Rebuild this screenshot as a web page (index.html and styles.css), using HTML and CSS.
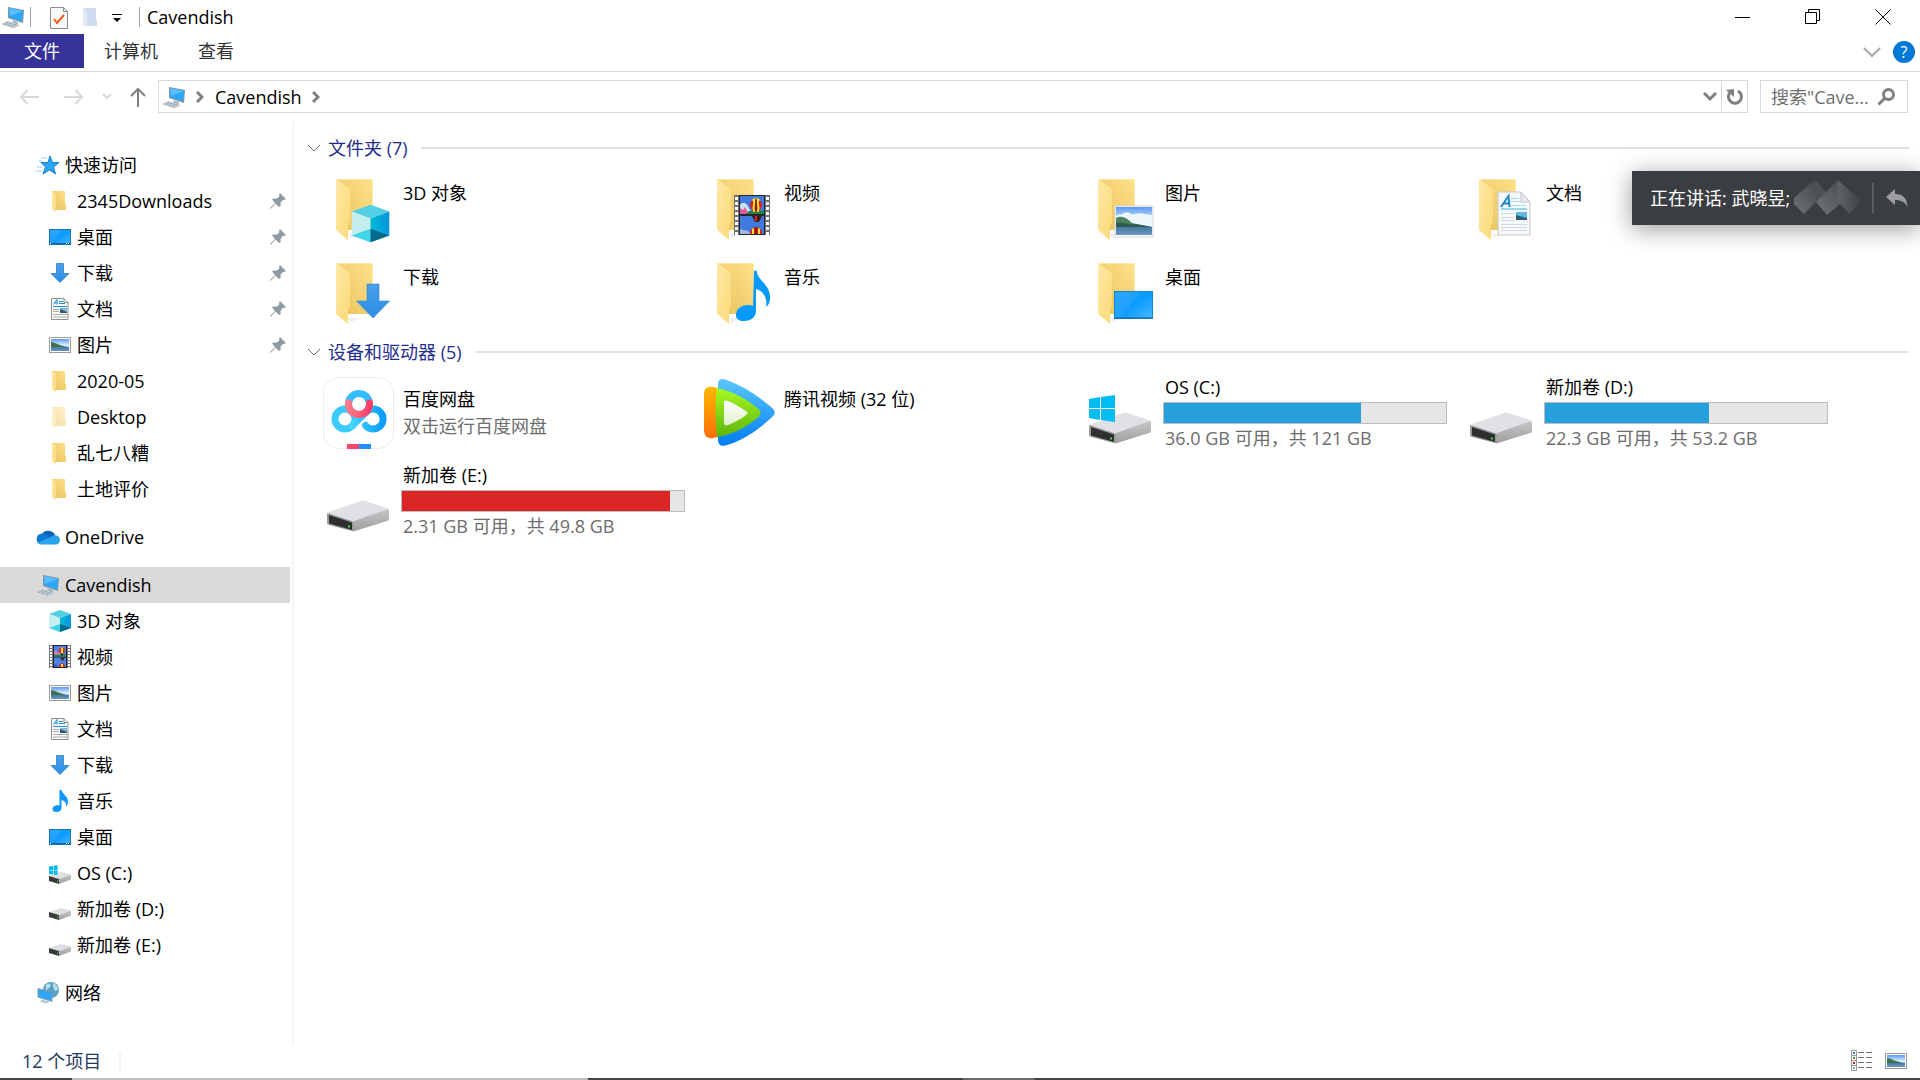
FILE: index.html
```html
<!DOCTYPE html>
<html lang="zh-CN">
<head>
<meta charset="utf-8">
<meta name="viewport" content="width=device-width, initial-scale=1">
<title>Cavendish</title>
<link rel="stylesheet" href="styles.css">
</head>
<body>
<svg class="sprite" aria-hidden="true">
  <defs>
    <linearGradient id="gBack" x1="0" y1="1" x2="1" y2="0"><stop offset="0" stop-color="#e8c35c"/><stop offset="1" stop-color="#ffe08a"/></linearGradient>
    <linearGradient id="gFlap" x1="0" y1="0" x2="1" y2="1"><stop offset="0" stop-color="#ffe9a6"/><stop offset="1" stop-color="#fbd978"/></linearGradient>
    <linearGradient id="gDesk" x1="0" y1="0" x2="1" y2="1"><stop offset="0" stop-color="#1e9fff"/><stop offset=".5" stop-color="#0a9bff"/><stop offset="1" stop-color="#4ab8ff"/></linearGradient>
    <linearGradient id="gDown" x1="0" y1="0" x2="0" y2="1"><stop offset="0" stop-color="#4a9fe8"/><stop offset="1" stop-color="#2b8ee8"/></linearGradient>
    <linearGradient id="gSky" x1="0" y1="0" x2="0" y2="1"><stop offset="0" stop-color="#5a97f5"/><stop offset=".5" stop-color="#d8effc"/><stop offset="1" stop-color="#cfe9f7"/></linearGradient>
    <linearGradient id="gSea" x1="0" y1="0" x2="0" y2="1"><stop offset="0" stop-color="#46789f"/><stop offset="1" stop-color="#6797c4"/></linearGradient>
    <linearGradient id="gSide" x1="0" y1="0" x2="0" y2="1"><stop offset="0" stop-color="#c6c7c9"/><stop offset="1" stop-color="#9d9ea0"/></linearGradient>
    <linearGradient id="gCubeR" x1="0" y1="0" x2="1" y2="0"><stop offset="0" stop-color="#00bcd8"/><stop offset="1" stop-color="#0893d8"/></linearGradient>
    <linearGradient id="gPan" x1="0" y1="0" x2="1" y2="0"><stop offset="0" stop-color="#45d4ff"/><stop offset="1" stop-color="#0a9cff"/></linearGradient>
    <linearGradient id="gRed" x1="0" y1="0" x2="1" y2="0"><stop offset="0" stop-color="#ff7a8a"/><stop offset="1" stop-color="#ff3d68"/></linearGradient>
    <linearGradient id="gTvB" x1="0" y1="0" x2="0" y2="1"><stop offset="0" stop-color="#5cc8ff"/><stop offset="1" stop-color="#007cf5"/></linearGradient>
    <linearGradient id="gTvO" x1="0" y1="0" x2="0" y2="1"><stop offset="0" stop-color="#ffb700"/><stop offset="1" stop-color="#ff6d0a"/></linearGradient>
    <linearGradient id="gTvG" x1="0" y1="0" x2="0" y2="1"><stop offset="0" stop-color="#a8fa22"/><stop offset="1" stop-color="#5cb40c"/></linearGradient>
    <linearGradient id="gTvW" x1="0" y1="0" x2="0" y2="1"><stop offset="0" stop-color="#ffffff"/><stop offset="1" stop-color="#dff2c8"/></linearGradient>
    <linearGradient id="gHaze" x1="1" y1="0" x2="0" y2="1"><stop offset="0" stop-color="#44474b"/><stop offset="1" stop-color="#707377"/></linearGradient>
    <linearGradient id="gHaze2" x1="0" y1="0" x2="1" y2="0"><stop offset="0" stop-color="#606367"/><stop offset="1" stop-color="#3f4246"/></linearGradient>
  </defs>

  <symbol id="pc" viewBox="0 -1 24 24">
    <path d="M7 1l16 3-1 13L7 12z" fill="#7e95a5"/><path d="M8 2l14 3-1 10.500L8 11z" fill="#2aa8fb"/><path d="M8 2l14 3-13 5z" fill="#58bcff"/>
    <path d="M12 14l5 2v3l-6-1z" fill="#a9b8c3"/>
    <path d="M0 18l7-3 12 4-6 3.500z" fill="#c5d0d8"/><path d="M2 18l10 3M5 16.500l11 3M7 16l-5 3M11 17l-5 3M15 18l-5 3" stroke="#8fa0ac" stroke-width=".8" fill="none" stroke-dasharray="2 1"/>
  </symbol>
  <symbol id="folder" viewBox="1 -1 24 24">
    <path d="M5 1h13v12l1 1v6H8z" fill="url(#gBack)"/><path d="M5 1l4 3.500V19l-.5 3L5 19z" fill="url(#gFlap)"/>
  </symbol>
  <symbol id="star" viewBox="0 -1 24 24">
    <path d="M14 2l2.500 6.500H23l-5.500 4.500 2 7-6-4L7 20l2.500-7L5 8.500h7z" fill="#2aa3f5" stroke="#1581cf" stroke-width="1"/>
    <path d="M5 4h6M3 7h4M1 13h6M0 17h6" stroke="#9fd0f2" stroke-width="1"/>
  </symbol>
  <symbol id="desktop" viewBox="0 0 24 24">
    <rect x="1.500" y="4.500" width="21" height="15" fill="url(#gDesk)" stroke="#1276bd"/><path d="M2 18.500h20" stroke="#0a5f9e"/><path d="M18 18.500h1M20 18.500h1M2 18.500h1" stroke="#fff"/><path d="M14 5L5 18H2V5z" fill="#fff" opacity=".08"/>
  </symbol>
  <symbol id="down" viewBox="0 0 24 24"><path d="M8.500 2.500h7v10H21l-9 9-9-9h5.500z" fill="url(#gDown)" stroke="#2b7fc9" stroke-width=".8"/></symbol>
  <symbol id="doc" viewBox="0 0 24 24">
    <path d="M3.500 1.500H16l4 4v17h-16.500z" fill="#fbfbfb" stroke="#8f8f8f"/><path d="M16 1.500v4h4" fill="#e8e8e8" stroke="#8f8f8f"/>
    <path d="M5.500 7.500l3.500-5v5M6.500 6h2.500M11 4.500h4M11 6.500h6M5 9.500h14" stroke="#1b93d9" fill="none"/><path d="M5 12.500h6M5 14.500h6M5 17.500h14M5 20h14" stroke="#a8a8a8"/><path d="M12 11h7v5h-7z" fill="#7fb6dc"/><path d="M12 12l7 3v1h-7z" fill="#31576a"/>
  </symbol>
  <symbol id="pic" viewBox="0 0 24 24">
    <rect x="1.500" y="4.500" width="21" height="15" fill="#fff" stroke="#9c9c9c"/><path d="M3 6h18v12H3z" fill="url(#gSky)"/><path d="M3 9c4 0 8 4 18 5v1H3z" fill="#41704d"/><path d="M3 14h18v4H3z" fill="url(#gSea)"/>
  </symbol>
  <symbol id="cube" viewBox="0 0 24 24">
    <path d="M12 1l11 4-11 4L1 5z" fill="#52cfe4"/><path d="M1 5l11 4v14L1 19z" fill="#c6eeee"/><path d="M23 5L12 9v14l11-4z" fill="url(#gCubeR)"/><path d="M1 19l11-4v8z" fill="#3fd5e6"/><path d="M12 15l11 4-11 4z" fill="#046a8c"/>
  </symbol>
  <symbol id="film" viewBox="0 0 24 24">
    <path d="M1 0h22v23H1z" fill="#777"/><path d="M5 0h14v23H5z" fill="#20242c"/><path d="M6 1h12v10.500H6zM6 12.500h12V22H6z" fill="#4a83e8"/>
    <path d="M3 1v22M21 1v22" stroke="#fff" stroke-width="2" stroke-dasharray="2 1"/>
    <path d="M6 7l2-2 2 3 2-1v4H6z" fill="#e27ab8"/><path d="M6 9.500h12v2H6z" fill="#2f8a35"/><ellipse cx="14" cy="5.500" rx="3" ry="3" fill="#e02020"/><path d="M13 2.500h2v6h-2z" fill="#ffe02a"/><path d="M13 8.500h2v2h-2z" fill="#222"/>
    <path d="M12 12.500h5l-1.500 3h-2z" fill="#3b2a2a"/><path d="M11 22c0-5 6-5 6 0z" fill="#e02020"/><path d="M13 19h2v3h-2z" fill="#ffe02a"/><path d="M6 19l5 3H6z" fill="#3a57b4"/>
  </symbol>
  <symbol id="note" viewBox="0 0 24 24"><path d="M11.500 1h2c.5 4 7 6.500 6.500 12-.2 2-1 4-2 5 .5-4-1-6-4.500-7v8c0 2.500-2.300 4-5 4s-4-1.200-4-3c0-2.500 3.500-4.500 7-3.500z" fill="#0a97fb"/></symbol>
  <symbol id="drive" viewBox="0 -3 24 24">
    <path d="M1 12l12-4 10 2.500L11 15z" fill="#dddee1"/><path d="M11 15l12-4.500v5L11 20z" fill="url(#gSide)"/><path d="M1 12l10 3v5L1 17z" fill="#3a3a3a"/><path d="M9 17h1.500" stroke="#2ee23e"/>
  </symbol>
  <symbol id="drivewin" viewBox="0 0 24 24">
    <use href="#drive" width="24" height="24"/><path d="M1 5.500l4-.6v4H1zM5.600 4.800L9.600 4.200v4.700h-4zM1 9.500h4v4l-4-.6zM5.600 9.500h4v4.600l-4-.5z" fill="#00b9f1"/>
  </symbol>
  <symbol id="cloud" viewBox="0 0 24 24">
    <path d="M6 9a7.500 7.500 0 0 1 13 1l-4 5z" fill="#0a5fb8"/><path d="M5 8.800c3-1 5 .2 7 1.700l3 2-11 6.500C-.5 18-.8 9.500 5 8.800z" fill="#0f78d4"/><path d="M15 12c2-2.500 8-2.500 9 2.500 0 3-2 5-4 5H5c-1.500 0-3-1-3.500-2z" fill="#28a4ea"/>
  </symbol>
  <symbol id="net" viewBox="0 0 24 24">
    <circle cx="15" cy="9" r="8" fill="#5b9fc4"/><path d="M10 4c3-3 6 0 4 2s-4 3-4 5M17 2c3 1 5 4 5 7l-3 1-2-4z" fill="#b9dfea"/><path d="M2 7.500l14 4v9L2 16z" fill="#2ea5f5" stroke="#7f9fb3"/><path d="M6 18.500l7 2v1l-4 1-5-2z" fill="#bfc9cf"/>
  </symbol>
  <symbol id="pin" viewBox="0 0 16 16"><path d="M10 0l6 6-2 1-1-.3-2.500 3 .2 3L9 14 5.500 10.500 1 15.500l-1 .5.500-1.500L5 10 2 6.500 3.500 5.500l3 .3 3-2.500L9 2z" fill="#8e9aa3"/></symbol>

  <symbol id="bigfolder" viewBox="0 0 72 72">
    <path d="M24 60l10 2-8 4z" fill="#000" opacity=".06"/>
    <path d="M12 6h37v51H22z" fill="url(#gBack)"/><path d="M12 6l14 10v33l-2 3v15l-12-10z" fill="url(#gFlap)"/><path d="M12 6.500h37M48.500 6v50" stroke="#fff0b8" opacity=".7" fill="none"/>
  </symbol>
  <symbol id="bf-cube" viewBox="-1 0 72 72"><use href="#bigfolder" width="72" height="72"/><svg x="26" y="30" width="41" height="41" viewBox="0 0 24 24"><use href="#cube" width="24" height="24"/></svg></symbol>
  <symbol id="bf-film" viewBox="-1 0 72 72"><use href="#bigfolder" width="72" height="72"/>
    <path d="M29 22h36v40H29z" fill="#6f6f6f"/><path d="M31.500 24v38M62.500 24v38" stroke="#fff" stroke-width="3" stroke-dasharray="3 2"/><path d="M34 22h26v40H34z" fill="#22262e"/><path d="M35 23h24v18H35zM35 43h24v18H35z" fill="#3f7ade"/>
    <path d="M35 32c3-4 6-2 8 1l4 8H35z" fill="#c6e4f4"/><path d="M35 35l3 2 2-3 4 7h-9z" fill="#e05a9c"/><path d="M44 38h15v3H41z" fill="#1f8640"/>
    <path d="M45 32a6 6 0 0 1 12 0c0 3-3 6-4 7h-4c-1-1-4-4-4-7z" fill="#e31c1c"/><path d="M47.500 27.500l2-1-1 9 1 3.500M54.500 27.500l-2-1 1 9-1 3.500" stroke="#ffe22e" stroke-width="2" fill="none"/><path d="M50.500 26h1v13h-1z" fill="#222"/><path d="M47 43h10l-3 6h-4z" fill="#381f24"/><path d="M50 43h2v5h-2z" fill="#e31c1c"/><path d="M45 61c-1-9 13-9 12 0z" fill="#e31c1c"/><path d="M48 55.500V61M54 55.500V61" stroke="#ffe22e" stroke-width="2"/><path d="M50.500 54h1v7h-1z" fill="#222"/><path d="M35 56l8 2 3 3H35z" fill="#9db9dc"/>
  </symbol>
  <symbol id="bf-pic" viewBox="-1 0 72 72"><use href="#bigfolder" width="72" height="72"/>
    <path d="M29 33h38v31H29z" fill="#fff" stroke="#d5d5dd"/><path d="M30 34h36v28H30z" fill="url(#gSky)"/><path d="M30 43c4-3 5 0 8-3 5-3 7 3 11 1s9 0 17 1v12H30z" fill="#eef8fc"/><path d="M30 45c6-3 11 0 16 5l20 4v2H30z" fill="#4c8462"/><path d="M30 50c8-1 13 2 19 1l17 3v1H30z" fill="#2e5a50"/><path d="M30 54h36v8H30z" fill="url(#gSea)"/>
  </symbol>
  <symbol id="bf-doc" viewBox="-1 0 72 72"><use href="#bigfolder" width="72" height="72"/>
    <path d="M31 19h23l9 10v33H31z" fill="#f7f8fa" stroke="#c3c6ca"/><path d="M54 19v10h9z" fill="#e9eaed" stroke="#c3c6ca"/>
    <path d="M34 34l7.500-11 1 11M36.500 30.500h6" stroke="#1a88cc" stroke-width="2" fill="none"/><path d="M44 25.500h8M44 28.500h10M44 32.500h15" stroke="#a9daf4"/><path d="M34 36h26" stroke="#9ad5f4" stroke-width="2"/><path d="M34 40.500h13M34 44.500h13M34 47.500h13M34 51.500h26M34 54.500h26M34 57.500h26" stroke="#d5d8dc"/><path d="M49 39h11v8H49z" fill="#62b7ea"/><path d="M49 42l11 3v2H49z" fill="#2d6076"/>
  </symbol>
  <symbol id="bf-down" viewBox="-1 0 72 72"><use href="#bigfolder" width="72" height="72"/><path d="M43 27h12v17h10.500L49 61 32.500 44H43z" fill="url(#gDown)" stroke="#2b86d8" stroke-width=".6"/></symbol>
  <symbol id="bf-note" viewBox="0 0 72 72"><use href="#bigfolder" x="1" width="72" height="72"/><path d="M50 14c2-1 3 0 3 2 2 8 14 13 13 25 0 4-1 7-4 9 2-8-3-17-10-18v22c0 6-5 10-12 10-5 0-8-2-8-6 0-7 8-12 17-9z" fill="#0799fb"/></symbol>
  <symbol id="bf-desk" viewBox="-1 0 72 72"><use href="#bigfolder" width="72" height="72"/><rect x="28.500" y="34.500" width="38" height="27" fill="url(#gDesk)" stroke="#1485d0"/><path d="M53 35L35 61h-6V35z" fill="#fff" opacity=".08"/><path d="M29 61h37" stroke="#0c609e"/></symbol>
  <symbol id="bigdrive" viewBox="0 -6 72 72">
    <path d="M4 43c0-1 1-1 2-2l32-11c1-.5 2-.5 4 0l22 7c1 .5 2 1 1 2L31 52z" fill="#e0e1e5"/><path d="M31 50l34-12c1 0 1 1 1 2v8c0 1-1 2-2 2L32 60c-1 .5-1.500.5-1.500 0z" fill="url(#gSide)"/><path d="M4 43c0-1 .5-1 2-.5L29 50c1.500.5 2 1 2 2v8.500L6 54c-1-.3-2-1-2-2z" fill="#9a9b9d"/><path d="M6 44l23 7.500V59L6 52.500z" fill="#2f2f2f"/><path d="M25 55.500h2" stroke="#2fe83e" stroke-width="2"/>
  </symbol>
  <symbol id="bigdrivewin" viewBox="0 0 72 72"><use href="#bigdrive" width="72" height="72"/><path d="M4 22l11-2v11H4zM16 20l14-2v13H16zM4 32h11v11L4 41zM16 32h14v13l-14-2z" fill="#00bcf5"/></symbol>
  <symbol id="baidu" viewBox="0 0 72 72">
    <rect x=".5" y=".5" width="70" height="71" rx="15" fill="#fff" stroke="#ececec"/>
    <circle cx="22" cy="42" r="10" fill="none" stroke="#3ccaff" stroke-width="7"/><path d="M29 49L42.500 35.500a10 10 0 1 1 0 13" fill="none" stroke="url(#gPan)" stroke-width="7" stroke-linecap="round"/>
    <circle cx="36" cy="27" r="10.500" fill="none" stroke="#35bdff" stroke-width="7"/><path d="M25.500 26v1a10.500 10.500 0 0 0 21 0v-1" fill="none" stroke="url(#gRed)" stroke-width="7" stroke-linecap="round"/>
    <path d="M24 67h12v5H24z" fill="#ff456c"/><path d="M36 67h12v5H36z" fill="#1e90ff"/>
  </symbol>
  <symbol id="tencent" viewBox="0 0 72 72">
    <path d="M14 7c0-5 4-6 9-4 16 6 30 15 44 27 5 4 5 7 0 11-14 13-28 22-44 27-5 2-9 0-9-5z" fill="url(#gTvB)"/>
    <path d="M0 18c0-8 4-9 9-8l5 1v49l-5 1c-6 1-9-2-9-9z" fill="url(#gTvO)"/>
    <path d="M13 11c14 3 27 9 39 19 6 4 6 8 0 12-12 10-25 16-39 18-2-16-2-33 0-49z" fill="url(#gTvG)"/>
    <path d="M20 26c0-3 2-3 4-2 7 3 12 6 18 10 2 1 2 3 0 4-6 5-11 7-18 10-2 1-4 0-4-2z" fill="url(#gTvW)"/>
  </symbol>
</svg>

<div class="window">
  <header class="titlebar">
    <svg class="ic24"><use href="#pc"/></svg>
    <span class="vsep"></span>
    <div class="quick">
      <button class="plain" aria-label="属性"><svg width="18" height="22" viewBox="0 0 18 22"><path d="M.5.500h13l4 4v17H.5z" fill="#f8f8f8" stroke="#8a8a8a"/><path d="M13.500.500v4h4" fill="none" stroke="#8a8a8a"/><path d="M4 12l3 4 7-8" fill="none" stroke="#f25c19" stroke-width="2"/></svg></button>
      <button class="plain" aria-label="新建文件夹"><svg width="14" height="20" viewBox="0 0 14 20"><path d="M0 0h13v12l1 1v5H4z" fill="#d0dcf0"/><path d="M0 0l4 4v15l-4-2z" fill="#e1e9f6"/></svg></button>
      <button class="plain" aria-label="自定义快速访问工具栏"><svg width="10" height="10" viewBox="0 0 10 10"><path d="M0 1.500h10" stroke="#000"/><path d="M1 5h8L5 9z"/></svg></button>
    </div>
    <span class="vsep"></span>
    <h1 class="title">Cavendish</h1>
    <div class="caption">
      <button class="plain" aria-label="最小化"><svg width="16" height="16" viewBox="0 0 16 16"><path d="M0 8.500h15" stroke="#000"/></svg></button>
      <button class="plain" aria-label="还原"><svg width="16" height="16" viewBox="0 0 16 16"><path d="M.5 3.500h11v11H.5zM3.500 3V.5h11v11H12" fill="none" stroke="#000"/></svg></button>
      <button class="plain" aria-label="关闭"><svg width="16" height="16" viewBox="0 0 16 16"><path d="M.5.500l15 15M15.500.500l-15 15" stroke="#000"/></svg></button>
    </div>
  </header>

  <div class="ribbon">
    <button class="tab tab-file">文件</button>
    <button class="tab">计算机</button>
    <button class="tab">查看</button>
    <div class="ribbon-end">
      <button class="plain" aria-label="展开功能区"><svg width="18" height="12" viewBox="0 0 18 12"><path d="M1 2l8 8 8-8" fill="none" stroke="#a9a9a9" stroke-width="2"/></svg></button>
      <button class="help" aria-label="帮助">?</button>
    </div>
  </div>

  <div class="navrow">
    <div class="history">
      <button class="plain" aria-label="后退"><svg width="20" height="16" viewBox="0 0 20 16"><path d="M20 8H2M8.500 1L2 8l6.500 7" fill="none" stroke="#d9d9d9" stroke-width="2"/></svg></button>
      <button class="plain" aria-label="前进"><svg width="20" height="16" viewBox="0 0 20 16"><path d="M0 8h18M11.500 1L18 8l-6.500 7" fill="none" stroke="#d9d9d9" stroke-width="2"/></svg></button>
      <button class="plain" aria-label="最近浏览的位置"><svg width="10" height="8" viewBox="0 0 10 8"><path d="M1 1l4 4 4-4" fill="none" stroke="#d9d9d9" stroke-width="2"/></svg></button>
      <button class="plain" aria-label="上移"><svg width="16" height="20" viewBox="0 0 16 20"><path d="M8 20V2M1 9l7-7 7 7" fill="none" stroke="#7f7f7f" stroke-width="2"/></svg></button>
    </div>
    <div class="address">
      <svg class="ic24"><use href="#pc"/></svg>
      <svg class="crumb" viewBox="0 0 8 12"><path d="M1 1l5 5-5 5" fill="none" stroke="#7f7f7f" stroke-width="3"/></svg>
      <a href="#" class="crumb-link">Cavendish</a>
      <svg class="crumb" viewBox="0 0 8 12"><path d="M1 1l5 5-5 5" fill="none" stroke="#7f7f7f" stroke-width="3"/></svg>
      <button class="plain drop" aria-label="以前的位置"><svg width="14" height="10" viewBox="0 0 14 10"><path d="M1 1l6 6 6-6" fill="none" stroke="#7f7f7f" stroke-width="3"/></svg></button>
      <button class="plain refresh" aria-label="刷新"><svg width="18" height="18" viewBox="0 0 18 18"><path d="M12 3a6.500 6.500 0 1 1-7.500 1" fill="none" stroke="#7f7f7f" stroke-width="3"/><path d="M0 2l8-1v8z" fill="#7f7f7f"/></svg></button>
    </div>
    <label class="search">
      <input type="text" aria-label="搜索" placeholder='搜索"Cave...'>
      <svg width="18" height="18" viewBox="0 0 18 18"><circle cx="11.500" cy="6.500" r="5" fill="none" stroke="#7f7f7f" stroke-width="3"/><path d="M8 10l-6.500 6.500" stroke="#7f7f7f" stroke-width="3"/></svg>
    </label>
  </div>

  <div class="body">
    <nav class="tree">
      <ul>
        <li><a href="#" class="root"><svg class="ic24"><use href="#star"/></svg>快速访问</a></li>
        <li><a href="#"><svg class="ic24"><use href="#folder"/></svg>2345Downloads<svg class="pin"><use href="#pin"/></svg></a></li>
        <li><a href="#"><svg class="ic24"><use href="#desktop"/></svg>桌面<svg class="pin"><use href="#pin"/></svg></a></li>
        <li><a href="#"><svg class="ic24"><use href="#down"/></svg>下载<svg class="pin"><use href="#pin"/></svg></a></li>
        <li><a href="#"><svg class="ic24"><use href="#doc"/></svg>文档<svg class="pin"><use href="#pin"/></svg></a></li>
        <li><a href="#"><svg class="ic24"><use href="#pic"/></svg>图片<svg class="pin"><use href="#pin"/></svg></a></li>
        <li><a href="#"><svg class="ic24"><use href="#folder"/></svg>2020-05</a></li>
        <li><a href="#"><svg class="ic24 faded"><use href="#folder"/></svg>Desktop</a></li>
        <li><a href="#"><svg class="ic24"><use href="#folder"/></svg>乱七八糟</a></li>
        <li><a href="#"><svg class="ic24"><use href="#folder"/></svg>土地评价</a></li>
      </ul>
      <ul>
        <li><a href="#" class="root"><svg class="ic24"><use href="#cloud"/></svg>OneDrive</a></li>
      </ul>
      <ul>
        <li><a href="#" class="root selected" aria-current="page"><svg class="ic24"><use href="#pc"/></svg>Cavendish</a></li>
        <li><a href="#"><svg class="ic24"><use href="#cube"/></svg>3D 对象</a></li>
        <li><a href="#"><svg class="ic24"><use href="#film"/></svg>视频</a></li>
        <li><a href="#"><svg class="ic24"><use href="#pic"/></svg>图片</a></li>
        <li><a href="#"><svg class="ic24"><use href="#doc"/></svg>文档</a></li>
        <li><a href="#"><svg class="ic24"><use href="#down"/></svg>下载</a></li>
        <li><a href="#"><svg class="ic24"><use href="#note"/></svg>音乐</a></li>
        <li><a href="#"><svg class="ic24"><use href="#desktop"/></svg>桌面</a></li>
        <li><a href="#"><svg class="ic24"><use href="#drivewin"/></svg>OS (C:)</a></li>
        <li><a href="#"><svg class="ic24"><use href="#drive"/></svg>新加卷 (D:)</a></li>
        <li><a href="#"><svg class="ic24"><use href="#drive"/></svg>新加卷 (E:)</a></li>
      </ul>
      <ul>
        <li><a href="#" class="root"><svg class="ic24"><use href="#net"/></svg>网络</a></li>
      </ul>
    </nav>

    <main class="content">
      <section>
        <button class="group"><svg width="14" height="9" viewBox="0 0 14 9"><path d="M1 1l6 6 6-6" fill="none" stroke="#6d6d6d"/></svg>文件夹 (7)</button>
        <div class="tiles folders">
          <a href="#" class="tile"><svg class="ic72"><use href="#bf-cube"/></svg><span>3D 对象</span></a>
          <a href="#" class="tile"><svg class="ic72"><use href="#bf-film"/></svg><span>视频</span></a>
          <a href="#" class="tile"><svg class="ic72"><use href="#bf-pic"/></svg><span>图片</span></a>
          <a href="#" class="tile"><svg class="ic72"><use href="#bf-doc"/></svg><span>文档</span></a>
          <a href="#" class="tile"><svg class="ic72"><use href="#bf-down"/></svg><span>下载</span></a>
          <a href="#" class="tile"><svg class="ic72"><use href="#bf-note"/></svg><span>音乐</span></a>
          <a href="#" class="tile"><svg class="ic72"><use href="#bf-desk"/></svg><span>桌面</span></a>
        </div>
      </section>
      <section>
        <button class="group"><svg width="14" height="9" viewBox="0 0 14 9"><path d="M1 1l6 6 6-6" fill="none" stroke="#6d6d6d"/></svg>设备和驱动器 (5)</button>
        <div class="tiles devices">
          <a href="#" class="tile app"><svg class="ic72"><use href="#baidu"/></svg><span class="info"><span>百度网盘</span><span class="sub">双击运行百度网盘</span></span></a>
          <a href="#" class="tile app"><svg class="ic72"><use href="#tencent"/></svg><span class="info"><span>腾讯视频 (32 位)</span></span></a>
          <a href="#" class="tile"><svg class="ic72"><use href="#bigdrivewin"/></svg><span class="info"><span>OS (C:)</span><span class="bar"><span class="fill" style="width:70%"></span></span><span class="sub">36.0 GB 可用，共 121 GB</span></span></a>
          <a href="#" class="tile"><svg class="ic72"><use href="#bigdrive"/></svg><span class="info"><span>新加卷 (D:)</span><span class="bar"><span class="fill" style="width:58%"></span></span><span class="sub">22.3 GB 可用，共 53.2 GB</span></span></a>
          <a href="#" class="tile"><svg class="ic72"><use href="#bigdrive"/></svg><span class="info"><span>新加卷 (E:)</span><span class="bar"><span class="fill full" style="width:95%"></span></span><span class="sub">2.31 GB 可用，共 49.8 GB</span></span></a>
        </div>
      </section>
    </main>
  </div>

  <footer class="status">
    <span class="count">12 个项目</span>
    <div class="views">
      <button class="plain" aria-label="详细信息"><svg width="22" height="22" viewBox="0 0 22 22"><path d="M.5.500h5v20h-5zM.5 5.500h5M.5 10.500h5M.5 15.500h5" fill="#fff" stroke="#999"/><path d="M2 3h2" stroke="#2b7cc0" stroke-width="2"/><path d="M2 8h2" stroke="#6b8a2a" stroke-width="2"/><path d="M2 13h2" stroke="#c22" stroke-width="2"/><path d="M2 18h2" stroke="#7fb89a" stroke-width="2"/><path d="M7 2.500h6M15 2.500h6M7 7.500h6M15 7.500h6M7 12.500h6M15 12.500h6M7 17.500h6M15 17.500h6" stroke="#777"/></svg></button>
      <button class="plain" aria-label="大缩略图"><svg class="ic24"><use href="#pic"/></svg></button>
    </div>
  </footer>
  <div class="taskbar-edge"><span class="lit"></span><span class="dim"></span></div>

  <aside class="speaker">
    <span>正在讲话: 武晓昱;</span>
    <svg width="68" height="36" viewBox="0 0 68 36"><path d="M0 18L16 4q5-5 6-4v22L10 34 0 24z" fill="url(#gHaze)"/><path d="M22 0l10 12-10 12z" fill="#4d5054"/><path d="M22 22L44 0l13 15-24 20z" fill="url(#gHaze)"/><path d="M44 0l22 20q2 3-2 5l-9 9-12-14z" fill="url(#gHaze2)"/></svg>
    <span class="bar-sep"></span>
    <button class="plain" aria-label="返回"><svg width="22" height="18" viewBox="0 0 22 18"><path d="M9 0v5c8 0 12 4 12.500 13C19 13 15 11 9 11v5L0 8z" fill="#9b9da0"/></svg></button>
  </aside>
</div>
</body>
</html>
```
FILE: styles.css
```css
* { box-sizing: border-box; }
body {
  margin: 0;
  background: #fff;
  color: #000;
  font: 18px/24px "Open Sans", "Noto Sans CJK SC", sans-serif;
}
.sprite { position: absolute; width: 0; height: 0; }
svg { display: block; flex: none; }
a { color: inherit; text-decoration: none; }
ul { margin: 0; padding: 0; list-style: none; }
button { font: inherit; color: inherit; border: 0; background: none; padding: 0; }
.plain { display: flex; align-items: center; justify-content: center; }
.ic24 { width: 24px; height: 24px; }
.ic72 { width: 72px; height: 72px; }
.faded { opacity: .5; }

.window { position: relative; min-height: 100vh; display: flex; flex-direction: column; }

/* Title bar */
.titlebar { display: flex; align-items: center; height: 34px; padding-left: 1px; }
.vsep { width: 1px; height: 20px; margin-left: 5px; background: #a0a0a0; }
.quick { display: flex; align-items: center; gap: 15px; margin: 2px 12px 0 19px; }
.title { margin: 0 0 0 7px; font-size: 18px; font-weight: 400; }
.caption { display: flex; margin: 0 2px 0 auto; height: 34px; }
.caption .plain { width: 70px; }

/* Ribbon tabs */
.ribbon { display: flex; height: 38px; border-bottom: 1px solid #d9d9d9; color: #333; }
.tab { height: 34px; padding: 0 20px; }
.tab-file { width: 84px; background: #353399; color: #fff; }
.ribbon-end { display: flex; align-items: center; gap: 12px; margin: 0 5px 2px auto; }
.help { width: 22px; height: 22px; border-radius: 50%; background: #0078d7; color: #fff; font-size: 16px; line-height: 22px; }

/* Navigation row */
.navrow { display: flex; gap: 12px; padding: 8px 12px 9px 19px; }
.history { display: flex; align-items: center; width: 127px; gap: 15px; }
.history .plain { min-width: 16px; }
.history .plain:first-child { margin-right: 11px; }
.address { flex: 1; display: flex; align-items: center; height: 33px; border: 1px solid #d9d9d9; padding-left: 3px; }
.crumb { width: 8px; height: 12px; margin: 0 11px 0 10px; }
.drop { width: 22px; margin-left: auto; }
.refresh { width: 26px; align-self: stretch; border-left: 1px solid #d9d9d9; }
.search { display: flex; align-items: center; width: 148px; height: 33px; padding: 0 12px 0 10px; border: 1px solid #d9d9d9; }
.search input { flex: 1; min-width: 0; border: 0; padding: 0; outline: 0; font: inherit; background: none; }
.search input::placeholder { color: #707070; opacity: 1; }

/* Body */
.body { flex: 1; display: flex; }
.tree { width: 294px; padding: 25px 2px 0 0; border-right: 2px solid #f5f5f5; }
.tree ul { margin-bottom: 12px; }
.tree a { display: flex; align-items: center; gap: 5px; height: 36px; padding: 0 4px 0 48px; }
.tree a.root { padding-left: 36px; }
.tree a.selected { background: #d9d9d9; }
.pin { width: 16px; height: 16px; margin-left: auto; }

.content { flex: 1; padding: 15px 11px 0 13px; }
.group { display: flex; align-items: center; gap: 7px; width: 100%; height: 22px; color: #1f2e8c; }
.group::after { content: ""; flex: 1; height: 2px; margin-left: 6px; background: #e2e2e2; }
.tiles { display: grid; grid-template-columns: repeat(auto-fill, 381px); padding: 14px 0 0 16px; }
.tile { display: flex; gap: 8px; }
.folders { grid-auto-rows: 84px; }
.folders .tile span { padding-top: 8px; }
.devices { grid-auto-rows: 88px; }
.info { display: flex; flex-direction: column; line-height: 20px; }
.app .info { padding-top: 12px; gap: 7px; }
.sub { color: #6d6d6d; }
.bar { width: 284px; height: 22px; margin: 5px 0 4px -2px; border: 1px solid #bcbcbc; background: #e6e6e6; }
.fill { display: block; height: 100%; background: #26a0da; }
.fill.full { background: #da2626; }

/* Status bar */
.status { display: flex; align-items: center; justify-content: space-between; height: 34px; padding: 0 12px 0 22px; color: #1e395b; }
.count { padding-right: 18px; border-right: 2px solid #f2f2f2; line-height: 18px; }
.views { display: flex; align-items: center; gap: 11px; }
.taskbar-edge { display: flex; height: 2px; padding-left: 72px; background: #444; }
.lit { width: 516px; background: #bdbdbd; }
.dim { width: 72px; margin-left: 375px; background: #6a6a6a; }

/* Floating speaker banner */
.speaker {
  position: absolute; top: 171px; right: 0;
  display: flex; align-items: center;
  width: 288px; height: 54px; padding-left: 18px;
  background: #3a3d42; color: #fff;
  box-shadow: 0 4px 24px rgba(0, 0, 0, .4);
}
.speaker > svg { margin-left: 4px; }
.bar-sep { width: 2px; height: 30px; margin: 0 12px 0 10px; background: #5a5d61; }
```
